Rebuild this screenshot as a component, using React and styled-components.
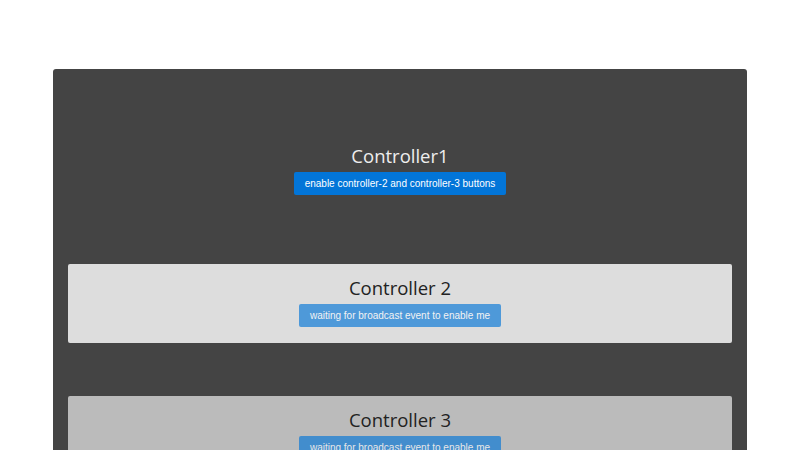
import React from 'react'
import styled, { createGlobalStyle } from 'styled-components'

const Global = createGlobalStyle`
  body {
    margin: 0;
    background: #fff;
    font-family: "Open Sans", sans-serif;
  }
`

const Wrapper = styled.div`
  width: 694px;
  margin: 69px auto 0;
  background: #444;
  border-radius: 3px;
  padding: 15px;
  box-sizing: border-box;
  min-height: 400px;
`

const Main = styled.div`
  display: flex;
  flex-direction: column;
  align-items: center;
  padding: 60px 0 69px;
`

const Card = styled.div`
  display: flex;
  flex-direction: column;
  align-items: center;
  background: ${(p) => p.bg};
  border-radius: 2px;
  padding: 12px 0 16px;
  margin-bottom: ${(p) => p.gap || 0}px;
`

const Title = styled.h3`
  margin: 0 0 4px;
  font-family: "Open Sans", sans-serif;
  font-weight: normal;
  font-size: 18.5px;
  line-height: 24px;
  color: ${(p) => (p.light ? '#eee' : '#222')};
`

const Button = styled.button`
  height: 23px;
  padding: 0 11px;
  border: none;
  border-radius: 2px;
  background: #0275d8;
  color: #fff;
  font-family: "Liberation Sans", Arial, sans-serif;
  font-size: 10px;
  cursor: pointer;
  &:disabled {
    opacity: 0.65;
    cursor: default;
  }
`

export default function App() {
  return (
    <>
      <Global />
      <Wrapper>
        <Main>
          <Title light>Controller1</Title>
          <Button>enable controller-2 and controller-3 buttons</Button>
        </Main>
        <Card bg="#ddd" gap={53}>
          <Title>Controller 2</Title>
          <Button disabled>waiting for broadcast event to enable me</Button>
        </Card>
        <Card bg="#bbb">
          <Title>Controller 3</Title>
          <Button disabled>waiting for broadcast event to enable me</Button>
        </Card>
      </Wrapper>
    </>
  )
}
